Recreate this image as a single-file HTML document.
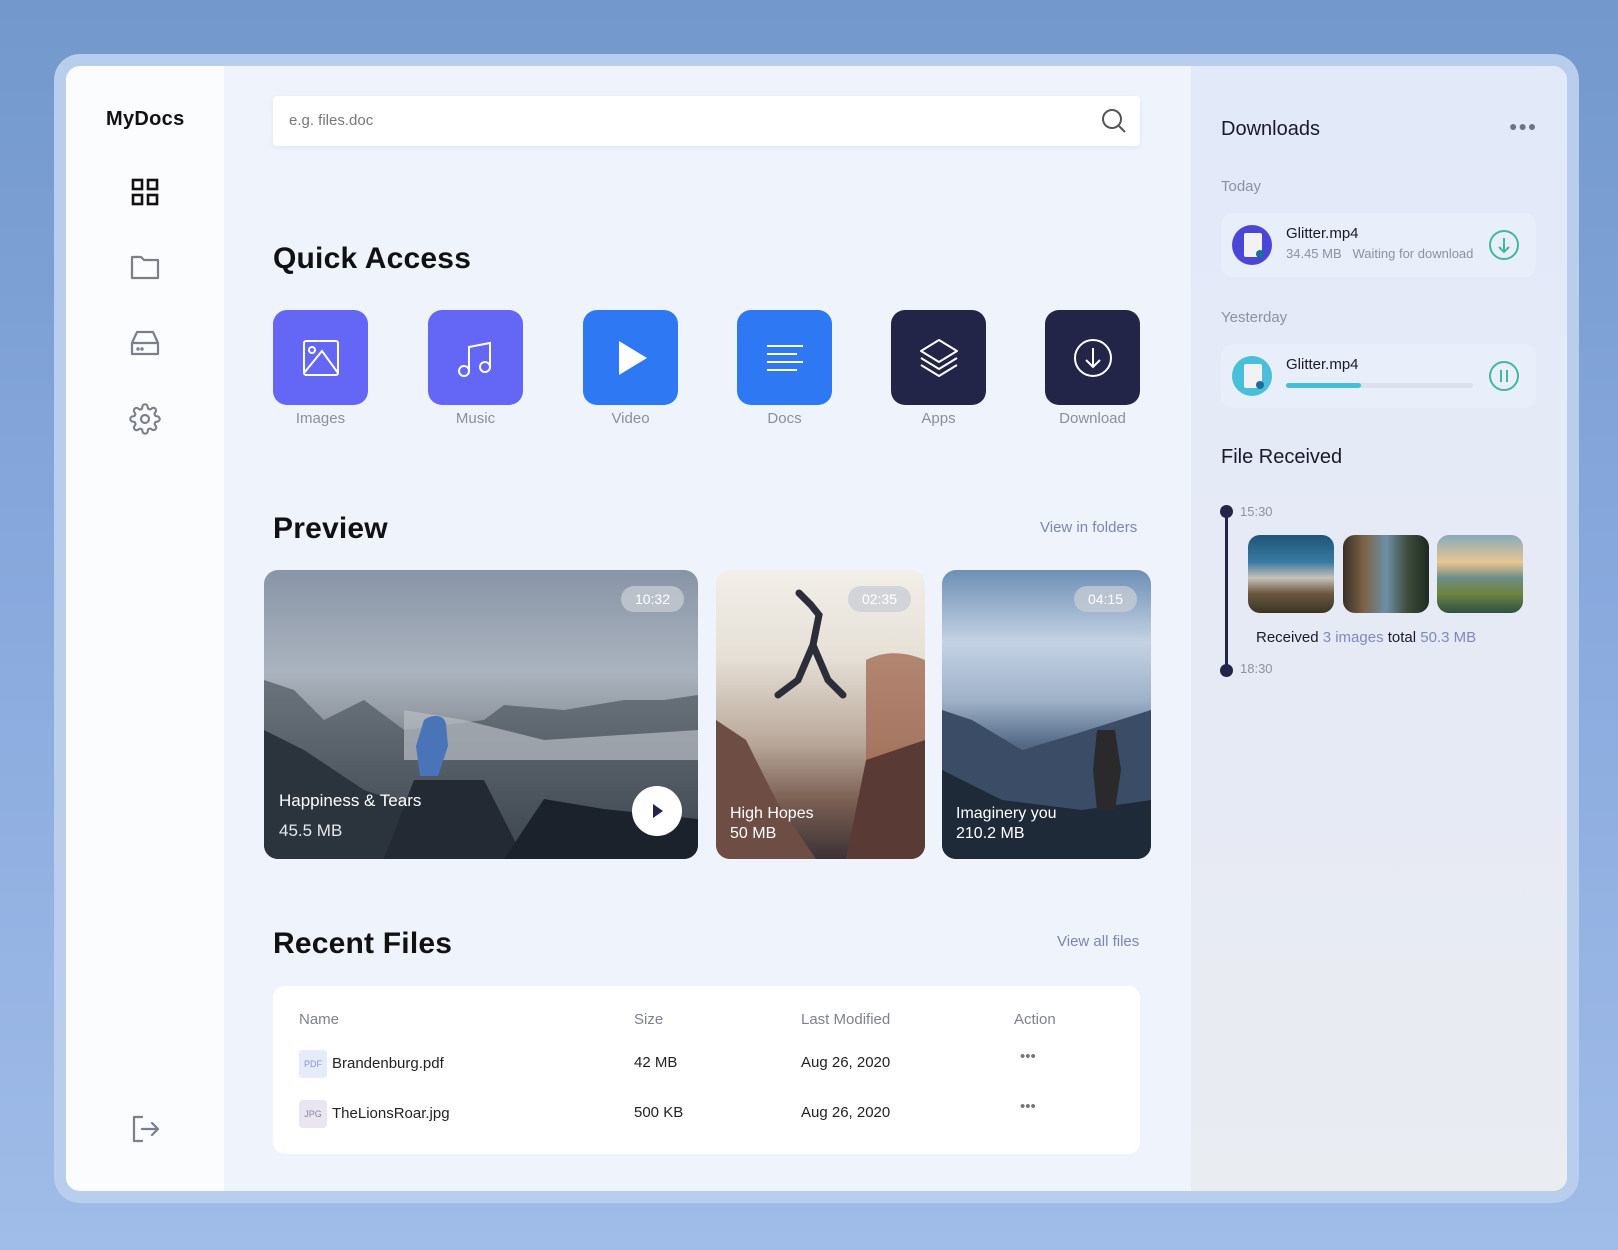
<!DOCTYPE html>
<html><head><meta charset="utf-8"><style>
*{box-sizing:border-box;margin:0;padding:0}
body{width:1618px;height:1250px;overflow:hidden;font-family:"Liberation Sans",sans-serif;background:linear-gradient(180deg,#7298cc 0%,#8aaade 50%,#a0bce8 100%);position:relative}
.frame{position:absolute;left:54px;top:54px;width:1525px;height:1149px;border-radius:26px;background:#b9cdec}
.in{position:absolute;left:66px;top:66px;width:1501px;height:1125px;border-radius:14px;overflow:hidden;background:#eef3fb}
.side{position:absolute;left:0;top:0;width:158px;height:100%;background:#fbfcfe}
.main{position:absolute;left:158px;top:0;width:967px;height:100%;background:#eff4fc}
.right{position:absolute;left:1125px;top:0;width:376px;height:100%;background:linear-gradient(180deg,#e2e9f9 0%,#e6eaf4 60%,#e9ecf1 100%)}
.abs{position:absolute}
.logo{left:40px;top:108px;font-size:20px;font-weight:bold;color:#111;letter-spacing:.3px}
.search{left:273px;top:96px;width:867px;height:50px;background:#fff;border-radius:4px;box-shadow:0 2px 6px rgba(120,140,180,.12)}
.search span{position:absolute;left:16px;top:16px;font-size:15px;color:#777}
h2{position:absolute;font-size:30px;font-weight:bold;color:#111;letter-spacing:.2px}
.tile{position:absolute;top:310px;width:95px;height:95px;border-radius:14px;display:flex;align-items:center;justify-content:center}
.tl{position:absolute;top:410px;width:95px;text-align:center;font-size:15px;color:#8a8f9c}
.link{position:absolute;font-size:15px;color:#7b86b0}
.card{position:absolute;top:570px;height:289px;border-radius:14px;overflow:hidden}
.badge{position:absolute;top:16px;height:26px;padding:0 14px;border-radius:13px;background:rgba(200,205,212,.75);color:#fff;font-size:14px;line-height:26px}
.ct{position:absolute;color:#fff;font-size:17px}
.table{left:273px;top:986px;width:867px;height:168px;background:#fff;border-radius:12px}
.th{position:absolute;top:1011px;font-size:15px;color:#7d8190}
.td{position:absolute;font-size:15px;color:#222}
.ft{position:absolute;width:28px;height:28px;border-radius:4px;font-size:9px;line-height:28px;text-align:center}
.dcard{position:absolute;left:1221px;width:315px;height:64px;border-radius:12px;background:#e9eefb}
.rl{position:absolute;font-size:15px;color:#8d92a0}
</style></head><body>
<div class="frame"></div>
<div class="in">
<div class="side"></div><div class="main"></div><div class="right"></div>
</div>

<div class="abs logo" style="left:106px">MyDocs</div>
<!-- sidebar icons -->
<svg class="abs" style="left:131px;top:178px" width="28" height="28" viewBox="0 0 28 28" fill="none" stroke="#111" stroke-width="2.6"><rect x="2" y="2" width="9" height="9"/><rect x="17" y="2" width="9" height="9"/><rect x="2" y="17" width="9" height="9"/><rect x="17" y="17" width="9" height="9"/></svg>
<svg class="abs" style="left:130px;top:253px" width="30" height="28" viewBox="0 0 30 28" fill="none" stroke="#7b7f8c" stroke-width="2.2" stroke-linejoin="round"><path d="M2 4h9l3 3h14v18H2z"/></svg>
<svg class="abs" style="left:130px;top:330px" width="30" height="26" viewBox="0 0 30 26" fill="none" stroke="#7b7f8c" stroke-width="2.2" stroke-linejoin="round"><path d="M7 2h16l5 11v11H2V13z"/><path d="M2 13h26"/><circle cx="8" cy="19" r=".6" fill="#7b7f8c"/><circle cx="12" cy="19" r=".6" fill="#7b7f8c"/></svg>
<svg class="abs" style="left:129px;top:403px" width="32" height="32" viewBox="0 0 24 24" fill="none" stroke="#7b7f8c" stroke-width="1.6" stroke-linejoin="round"><circle cx="12" cy="12" r="3"/><path d="M19.4 15a1.65 1.65 0 0 0 .33 1.82l.06.06a2 2 0 1 1-2.83 2.83l-.06-.06a1.65 1.65 0 0 0-1.82-.33 1.65 1.65 0 0 0-1 1.51V21a2 2 0 1 1-4 0v-.09A1.65 1.65 0 0 0 9 19.4a1.65 1.65 0 0 0-1.82.33l-.06.06a2 2 0 1 1-2.83-2.83l.06-.06A1.65 1.65 0 0 0 4.68 15a1.65 1.65 0 0 0-1.51-1H3a2 2 0 1 1 0-4h.09A1.65 1.65 0 0 0 4.6 9a1.65 1.65 0 0 0-.33-1.82l-.06-.06a2 2 0 1 1 2.83-2.83l.06.06A1.65 1.65 0 0 0 9 4.68a1.65 1.65 0 0 0 1-1.51V3a2 2 0 1 1 4 0v.09a1.65 1.65 0 0 0 1 1.51 1.65 1.65 0 0 0 1.82-.33l.06-.06a2 2 0 1 1 2.83 2.83l-.06.06A1.65 1.65 0 0 0 19.4 9a1.65 1.65 0 0 0 1.51 1H21a2 2 0 1 1 0 4h-.09a1.65 1.65 0 0 0-1.51 1z"/></svg>
<svg class="abs" style="left:131px;top:1115px" width="30" height="28" viewBox="0 0 30 28" fill="none" stroke="#7b7f8c" stroke-width="2.2" stroke-linecap="round" stroke-linejoin="round"><path d="M11 2H3v24h8"/><path d="M11 14h16M21 8l6 6-6 6"/></svg>

<div class="abs search"><span>e.g. files.doc</span>
<svg class="abs" style="left:828px;top:12px" width="26" height="26" viewBox="0 0 26 26" fill="none" stroke="#555" stroke-width="2"><circle cx="11" cy="11" r="9"/><path d="M18 18l6 6"/></svg></div>

<h2 style="left:273px;top:242px">Quick Access</h2>
<div class="tile" style="left:273px;background:#6466f5"><svg width="40" height="40" viewBox="0 0 40 40" fill="none" stroke="#fff" stroke-width="2"><rect x="3" y="3" width="34" height="34" rx="2"/><circle cx="11" cy="12" r="3"/><path d="M3 35l18-22 16 22"/></svg></div>
<div class="tile" style="left:428px;background:#6466f5"><svg width="40" height="40" viewBox="0 0 40 40" fill="none" stroke="#fff" stroke-width="2"><circle cx="8" cy="33" r="5"/><circle cx="29" cy="29" r="5"/><path d="M13 33V9l21-4v24"/></svg></div>
<div class="tile" style="left:583px;background:#2f78f4"><svg width="40" height="40" viewBox="0 0 40 40"><path d="M8 3l28 17-28 17z" fill="#fff"/></svg></div>
<div class="tile" style="left:737px;background:#2f78f4"><svg width="40" height="40" viewBox="0 0 40 40" stroke="#fff" stroke-width="2"><path d="M2 8h36M2 16h30M2 24h36M2 32h30"/></svg></div>
<div class="tile" style="left:891px;background:#222448"><svg width="42" height="42" viewBox="0 0 42 42" fill="none" stroke="#fff" stroke-width="2" stroke-linejoin="round"><path d="M21 3l18 11-18 11L3 14z"/><path d="M3 21l18 11 18-11M3 28l18 11 18-11"/></svg></div>
<div class="tile" style="left:1045px;background:#222448"><svg width="42" height="42" viewBox="0 0 42 42" fill="none" stroke="#fff" stroke-width="2"><circle cx="21" cy="21" r="18"/><path d="M21 11v19M14 23l7 7 7-7"/></svg></div>
<div class="tl" style="left:273px">Images</div><div class="tl" style="left:428px">Music</div><div class="tl" style="left:583px">Video</div><div class="tl" style="left:737px">Docs</div><div class="tl" style="left:891px">Apps</div><div class="tl" style="left:1045px">Download</div>

<h2 style="left:273px;top:512px">Preview</h2>
<div class="link" style="left:1040px;top:519px">View in folders</div>

<div class="card" style="left:264px;width:434px;background:linear-gradient(180deg,#8895a6 0%,#aab3bf 35%,#949ba3 50%,#5d6670 70%,#2a323d 90%,#1c2430 100%)">
<svg class="abs" style="left:0;top:0" width="434" height="289" viewBox="0 0 434 289"><path d="M0 110l30 10 30 30 40-20 40 30 80-10 20-15 60 5 60-10 40 0 34-5V289H0z" fill="#4f5760" opacity=".7"/><path d="M140 140l60 10 80 20 154-10v30H140z" fill="#b9bec4" opacity=".7"/><path d="M0 160l40 20 60 40 60 20 80 49H0z" fill="#2b333c"/><path d="M160 150c8-6 20-6 22 4l2 22-10 30h-18l-4-30z" fill="#4a74b8"/><path d="M150 210l70 0 40 79H120z" fill="#232a33"/><path d="M240 289l40-60 60 10 94 10v40z" fill="#1b222b"/></svg>
<div class="badge" style="right:14px">10:32</div>
<div class="ct" style="left:15px;top:221px">Happiness &amp; Tears</div>
<div class="ct" style="left:15px;top:251px;font-size:17px;color:#e6e8ec">45.5 MB</div>
<div class="abs" style="left:368px;top:216px;width:50px;height:50px;border-radius:50%;background:#fff"><svg class="abs" style="left:20px;top:17px" width="12" height="16" viewBox="0 0 12 16"><path d="M1 1l10 7-10 7z" fill="#222448"/></svg></div>
</div>

<div class="card" style="left:716px;width:209px;background:linear-gradient(180deg,#f2efe9 0%,#e6e0d6 30%,#b9a89a 60%,#7a5e52 80%,#3d3236 100%)">
<svg class="abs" style="left:0;top:0" width="209" height="289" viewBox="0 0 209 289"><path d="M150 90c20-10 40-8 59 0v199H150z" fill="#a0674f" opacity=".75"/><path d="M0 150l30 20 30 60 40 59H0z" fill="#6e4d45"/><path d="M150 190l59-20v119H130z" fill="#5a3a34"/><path d="M95 35l-12-12M95 35l8 10-6 30-15 35-20 15M97 75l15 35 15 15" stroke="#2c2d38" stroke-width="7" fill="none" stroke-linecap="round"/></svg>
<div class="badge" style="right:14px">02:35</div>
<div class="ct" style="left:14px;top:235px;font-size:16px">High Hopes</div>
<div class="ct" style="left:14px;top:255px;font-size:16px">50 MB</div>
</div>

<div class="card" style="left:942px;width:209px;background:linear-gradient(180deg,#6e8fb6 0%,#c4d2e3 25%,#9fb2c8 45%,#556b88 60%,#2f4058 80%,#1e2836 100%)">
<svg class="abs" style="left:0;top:0" width="209" height="289" viewBox="0 0 209 289"><path d="M0 140l30 10 50 30 50-15 79-25v149H0z" fill="#3b4c66"/><path d="M0 200l60 30 80 10 69-10v59H0z" fill="#1f2a38"/><path d="M155 160h18l6 40-6 40h-18l-4-40z" fill="#2a2a2c"/></svg>
<div class="badge" style="right:14px">04:15</div>
<div class="ct" style="left:14px;top:235px;font-size:16px">Imaginery you</div>
<div class="ct" style="left:14px;top:255px;font-size:16px">210.2 MB</div>
</div>

<h2 style="left:273px;top:927px">Recent Files</h2>
<div class="link" style="left:1057px;top:933px">View all files</div>
<div class="abs table"></div>
<div class="th" style="left:299px">Name</div><div class="th" style="left:634px">Size</div><div class="th" style="left:801px">Last Modified</div><div class="th" style="left:1014px">Action</div>
<div class="ft" style="left:299px;top:1050px;background:#e6ebfa;color:#8a96c9">PDF</div>
<div class="td" style="left:332px;top:1055px">Brandenburg.pdf</div>
<div class="td" style="left:634px;top:1054px">42 MB</div><div class="td" style="left:801px;top:1054px">Aug 26, 2020</div>
<div class="td" style="left:1020px;top:1048px;color:#777">•••</div>
<div class="ft" style="left:299px;top:1100px;background:#e9e6f2;color:#8a86a0">JPG</div>
<div class="td" style="left:332px;top:1105px">TheLionsRoar.jpg</div>
<div class="td" style="left:634px;top:1104px">500 KB</div><div class="td" style="left:801px;top:1104px">Aug 26, 2020</div>
<div class="td" style="left:1020px;top:1098px;color:#777">•••</div>

<!-- right -->
<div class="abs" style="left:1221px;top:118px;font-size:20px;color:#1a1a2a">Downloads</div>
<div class="abs" style="left:1509px;top:118px;font-size:14px;color:#6f7480;letter-spacing:1px">●●●</div>
<div class="rl" style="left:1221px;top:178px">Today</div>
<div class="dcard" style="top:213px">
<div class="abs" style="left:11px;top:12px;width:40px;height:40px;border-radius:50%;background:#4a46d6"><div class="abs" style="left:12px;top:8px;width:18px;height:24px;background:#f2f2f4;border-radius:2px"></div><div class="abs" style="left:24px;top:25px;width:8px;height:8px;border-radius:50%;background:#1b6d9a"></div></div>
<div class="abs" style="left:65px;top:12px;font-size:15px;color:#1a1a2a">Glitter.mp4</div>
<div class="abs" style="left:65px;top:33px;font-size:13px;color:#8d92a0">34.45 MB&nbsp;&nbsp;&nbsp;Waiting for download</div>
<svg class="abs" style="left:267px;top:16px" width="32" height="32" viewBox="0 0 32 32" fill="none" stroke="#3fb99a" stroke-width="2"><circle cx="16" cy="16" r="14"/><path d="M16 9v14M11 18l5 5 5-5"/></svg>
</div>
<div class="rl" style="left:1221px;top:309px">Yesterday</div>
<div class="dcard" style="top:344px">
<div class="abs" style="left:11px;top:12px;width:40px;height:40px;border-radius:50%;background:#49bfd9"><div class="abs" style="left:12px;top:8px;width:18px;height:24px;background:#f2f2f4;border-radius:2px"></div><div class="abs" style="left:24px;top:25px;width:8px;height:8px;border-radius:50%;background:#1b6d9a"></div></div>
<div class="abs" style="left:65px;top:12px;font-size:15px;color:#1a1a2a">Glitter.mp4</div>
<div class="abs" style="left:65px;top:39px;width:187px;height:5px;border-radius:3px;background:#dbe1ef"><div style="width:75px;height:5px;border-radius:3px;background:#46bfd6"></div></div>
<svg class="abs" style="left:267px;top:16px" width="32" height="32" viewBox="0 0 32 32" fill="none" stroke="#3fb99a" stroke-width="2"><circle cx="16" cy="16" r="14"/><path d="M13 10v12M19 10v12"/></svg>
</div>
<div class="abs" style="left:1221px;top:446px;font-size:20px;color:#1a1a2a">File Received</div>
<div class="abs" style="left:1225px;top:511px;width:3px;height:160px;background:#222448"></div>
<div class="abs" style="left:1220px;top:505px;width:13px;height:13px;border-radius:50%;background:#222448"></div>
<div class="abs" style="left:1220px;top:664px;width:13px;height:13px;border-radius:50%;background:#222448"></div>
<div class="rl" style="left:1240px;top:504px;font-size:13px">15:30</div>
<div class="rl" style="left:1240px;top:661px;font-size:13px">18:30</div>
<div class="abs" style="left:1248px;top:535px;width:86px;height:78px;border-radius:12px;background:linear-gradient(180deg,#1f5578 0%,#3a7aa0 35%,#c6c2b8 55%,#6b5840 75%,#3a3426 100%)"></div>
<div class="abs" style="left:1343px;top:535px;width:86px;height:78px;border-radius:12px;background:linear-gradient(90deg,#3a3026 0%,#7c6448 25%,#6d8fa6 50%,#3e4c3a 75%,#1d2a22 100%)"></div>
<div class="abs" style="left:1437px;top:535px;width:86px;height:78px;border-radius:12px;background:linear-gradient(180deg,#88aab8 0%,#e8c692 35%,#6d8c88 55%,#6e8440 75%,#2f5044 100%)"></div>
<div class="abs" style="left:1256px;top:629px;font-size:15px;color:#1a1a2a">Received <span style="color:#7d8ac0">3 images</span> total <span style="color:#7d8ac0">50.3 MB</span></div>
</body></html>
